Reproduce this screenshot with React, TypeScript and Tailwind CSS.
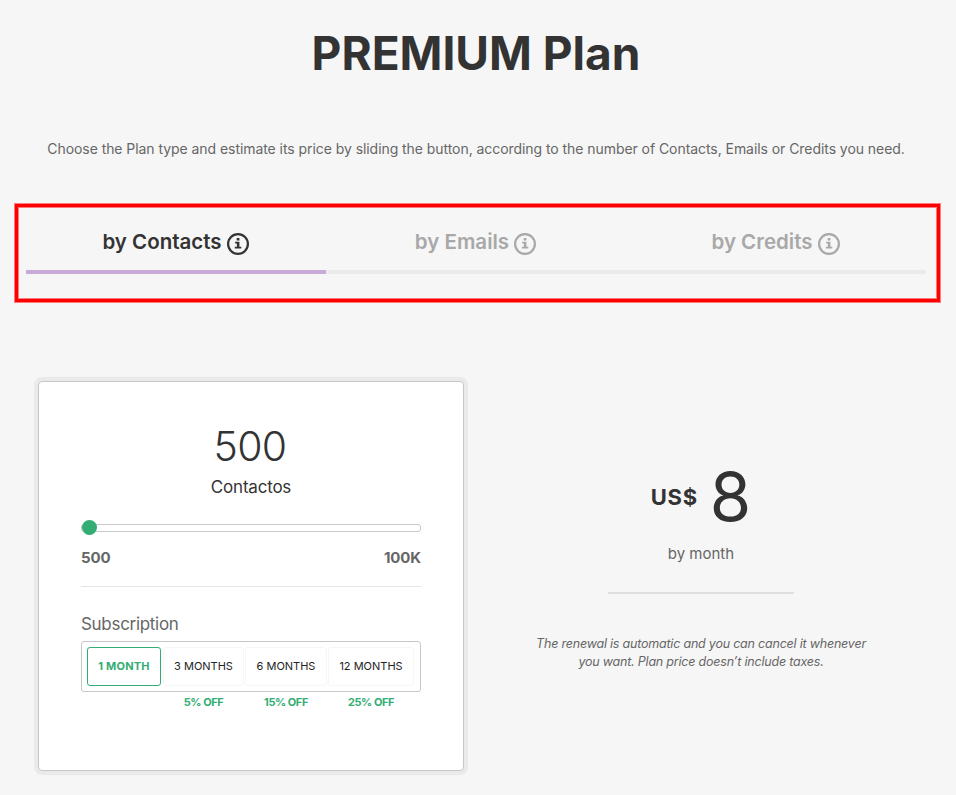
const InfoIcon = () => (
  <svg viewBox="0 0 22 22" className="mt-[3px] h-[22px] w-[22px]" fill="none">
    <circle cx="11" cy="11" r="9.9" stroke="currentColor" strokeWidth="2.2" />
    <path
      d="M9.7 5h2.7v2.4H9.7zM8.1 8.8h4.3v5h1.9v1.7H7.8v-1.7h2.1v-3.3H8.1z"
      fill="currentColor"
    />
  </svg>
)

const tabs = [
  { label: "by Contacts", active: true },
  { label: "by Emails", active: false },
  { label: "by Credits", active: false },
]

const months = [
  { label: "1 MONTH", off: "", width: "w-[74px] mr-px", active: true },
  { label: "3 MONTHS", off: "5% OFF", width: "w-[81px]", active: false },
  { label: "6 MONTHS", off: "15% OFF", width: "w-[82px]", active: false },
  { label: "12 MONTHS", off: "25% OFF", width: "w-[86px]", active: false },
]

const PlanTabs = () => {
  return (
    <nav className="ml-[15px] h-[98px] w-[925px] border-[3px] border-[#ff0000] px-2 shadow-[0_0_0_1px_#ff7b7b,inset_0_0_0_1px_#ff7b7b]">
      <ul className="flex w-[900px]">
        {tabs.map((tab) => (
          <li
            key={tab.label}
            className={`flex h-[67px] w-[300px] items-center justify-center gap-[5px] border-b-4 pt-[7px] pr-px text-[20.5px] font-semibold whitespace-nowrap ${
              tab.active
                ? "border-[#c9a9d6] text-[#333333]"
                : "border-[#eaeaea] text-[#a8a8a8]"
            }`}
          >
            <span>{tab.label}</span>
            <InfoIcon />
          </li>
        ))}
      </ul>
    </nav>
  )
}

const PlanCard = () => {
  return (
    <div className="h-[390px] w-[426px] rounded-[4px] border border-[#c7c7c7] bg-white px-[42px] shadow-[0_0_0_4px_#eaeaea]">
      <div className="flex h-[142px] flex-col items-center pt-[39px] text-[#333333]">
        <span className="mr-[2px] text-[41px] leading-[50px] font-light tracking-[-0.7px]">
          500
        </span>
        <span className="mt-[4px] text-[17px] leading-[24px] tracking-[-0.2px]">
          Contactos
        </span>
      </div>
      <div className="flex h-[8px] items-center rounded-[3px] border border-[#c9c9c9]">
        <span className="-mt-px h-[15px] w-[15px] shrink-0 rounded-full bg-[#33ad73]" />
      </div>
      <div className="flex h-[55px] justify-between border-b border-[#e5e5e5] pt-[15px] text-[15px] leading-[22px] font-bold tracking-[-0.1px] text-[#666666]">
        <span>500</span>
        <span>100K</span>
      </div>
      <p className="mt-[25px] text-[17px] leading-[24px] tracking-[-0.3px] text-[#666666]">
        Subscription
      </p>
      <div className="mt-[5px] flex h-[51px] gap-px rounded-[3px] border border-[#c7c7c7] p-[5px]">
        {months.map((month) => (
          <div key={month.label} className={`shrink-0 text-center ${month.width}`}>
            <div
              className={`flex h-[39px] items-center justify-center rounded-[3px] border text-[11px] whitespace-nowrap ${
                month.active
                  ? "border-[#33ad73] font-bold tracking-[0.2px] text-[#33ad73]"
                  : "border-[#f6f6f6] text-[#222222]"
              }`}
            >
              {month.label}
            </div>
            <p className="mt-[9px] text-[11px] leading-[14px] font-bold tracking-[-0.45px] text-[#33ad73]">
              {month.off}
            </p>
          </div>
        ))}
      </div>
    </div>
  )
}

const PlanPrice = () => {
  return (
    <div className="ml-[67px] flex w-[340px] flex-col items-center pt-[79px] text-[#666666]">
      <div className="flex h-[72px] items-center gap-[12px] text-[#333333]">
        <span className="mt-[2px] text-[22px] font-bold tracking-[0.7px]">US$</span>
        <span className="mt-[2px] text-[67px] leading-[72px]">8</span>
      </div>
      <p className="mt-[11px] text-[15px] leading-[22px]">by month</p>
      <hr className="mt-[27px] w-[186px] border-t-2 border-[#dfdfdf]" />
      <p className="mt-[41px] text-center text-[12.5px] leading-[18px] tracking-[-0.21px] whitespace-nowrap italic">
        The renewal is automatic and you can cancel it whenever
        <br />
        you want. Plan price doesn’t include taxes.
      </p>
    </div>
  )
}

export const App = () => {
  return (
    <main className="h-[795px] w-[956px] overflow-hidden bg-[#f6f6f6] font-['Inter',sans-serif]">
      <header className="h-[204px] w-[952px] text-center">
        <h1 className="pt-[23px] text-[46px] leading-[60px] font-bold text-[#333333]">
          PREMIUM Plan
        </h1>
        <p className="mt-[55px] text-[14px] leading-[22px] tracking-[-0.06px] text-[#666666]">
          Choose the Plan type and estimate its price by sliding the button,
          according to the number of Contacts, Emails or Credits you need.
        </p>
      </header>
      <PlanTabs />
      <section className="mt-[79px] ml-[38px] flex">
        <PlanCard />
        <PlanPrice />
      </section>
    </main>
  )
}

export default App
